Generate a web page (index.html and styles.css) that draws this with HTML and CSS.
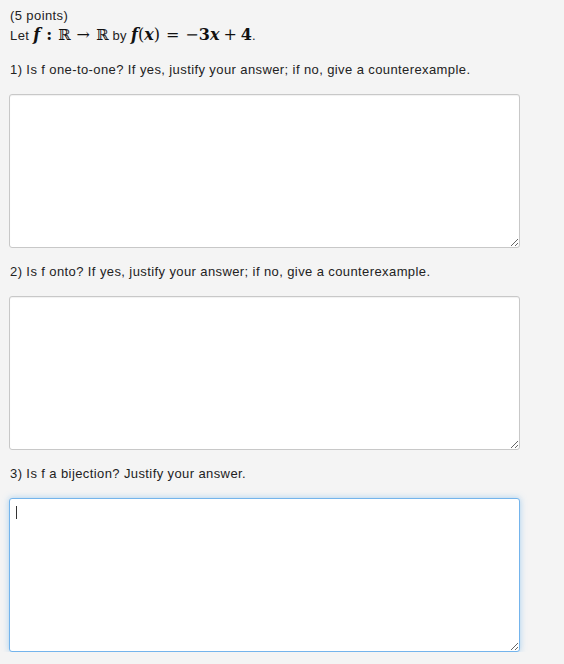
FILE: index.html
```html
<!DOCTYPE html>
<html>
<head>
<meta charset="utf-8">
<link rel="stylesheet" href="styles.css">
</head>
<body>
<div class="page">
  <div class="intro">
    <div class="line">(5 points)</div>
    <div class="line">Let <span class="m"><b class="mi">f</b><b class="rel bold">:</b><span class="bb">ℝ</span><span class="rel">→</span><span class="bb">ℝ</span></span> by <span class="m"><b class="mi">f</b><span class="mr">(</span><b class="mi">x</b><span class="mr">)</span><span class="rel">=</span><span class="mr">−</span><b class="mn">3</b><b class="mi">x</b><span class="bin">+</span><b class="mn">4</b></span>.</div>
  </div>
  <div class="q">
    <div class="label">1) Is f one-to-one? If yes, justify your answer; if no, give a counterexample.</div>
    <textarea class="answer"></textarea>
  </div>
  <div class="q">
    <div class="label">2) Is f onto? If yes, justify your answer; if no, give a counterexample.</div>
    <textarea class="answer"></textarea>
  </div>
  <div class="q">
    <div class="label">3) Is f a bijection? Justify your answer.</div>
    <div class="wrap">
      <textarea class="answer focused"></textarea>
      <span class="caret"></span>
    </div>
  </div>
</div>
</body>
</html>
```
FILE: styles.css
```css
html, body {
  margin: 0;
  padding: 0;
  background: #f4f4f4;
}
body {
  font-family: "Liberation Sans", Arial, sans-serif;
  font-size: 13px;
  letter-spacing: 0.4px;
  color: #222;
}
.page {
  padding: 8px 9px 0 9px;
}
.intro {
  padding-left: 1px;
}
.line {
  line-height: 16px;
}
.intro .line + .line {
  line-height: 20px;
  margin-top: 1px;
}
.m {
  font-family: "DejaVu Serif", "Liberation Serif", serif;
  font-size: 16px;
  letter-spacing: 0;
  color: #111;
}
.mi {
  font-style: italic;
  font-weight: bold;
}
.mn {
  font-weight: bold;
}
.bold {
  font-weight: bold;
}
.rel {
  margin: 0 6px;
}
.rel:not(.bold) {
  font-weight: normal;
}
.bin {
  margin: 0 4px;
  font-weight: normal;
}
.bb {
  font-family: "DejaVu Serif", serif;
  font-size: 15px;
  font-weight: normal;
}
.mr {
  font-weight: normal;
}
.q {
  display: flex;
  flex-direction: column;
}
.label {
  padding-left: 1px;
  line-height: 16px;
  margin: 16px 0 16px 0;
}
.wrap {
  position: relative;
  display: flex;
}
.answer {
  box-sizing: border-box;
  width: 511px;
  height: 154px;
  margin: 0;
  border: 1px solid #c8c8c8;
  border-radius: 3px;
  background: #fff;
  box-shadow: inset 0 1px 1px rgba(0,0,0,0.06);
  outline: none;
  font-family: "Liberation Sans", Arial, sans-serif;
  font-size: 12px;
}
.focused {
  border-color: #74b4ec;
  box-shadow: 0 0 6px rgba(102,175,233,0.55);
}
.caret {
  position: absolute;
  left: 7px;
  top: 8px;
  width: 1px;
  height: 13px;
  background: #333;
}
```
